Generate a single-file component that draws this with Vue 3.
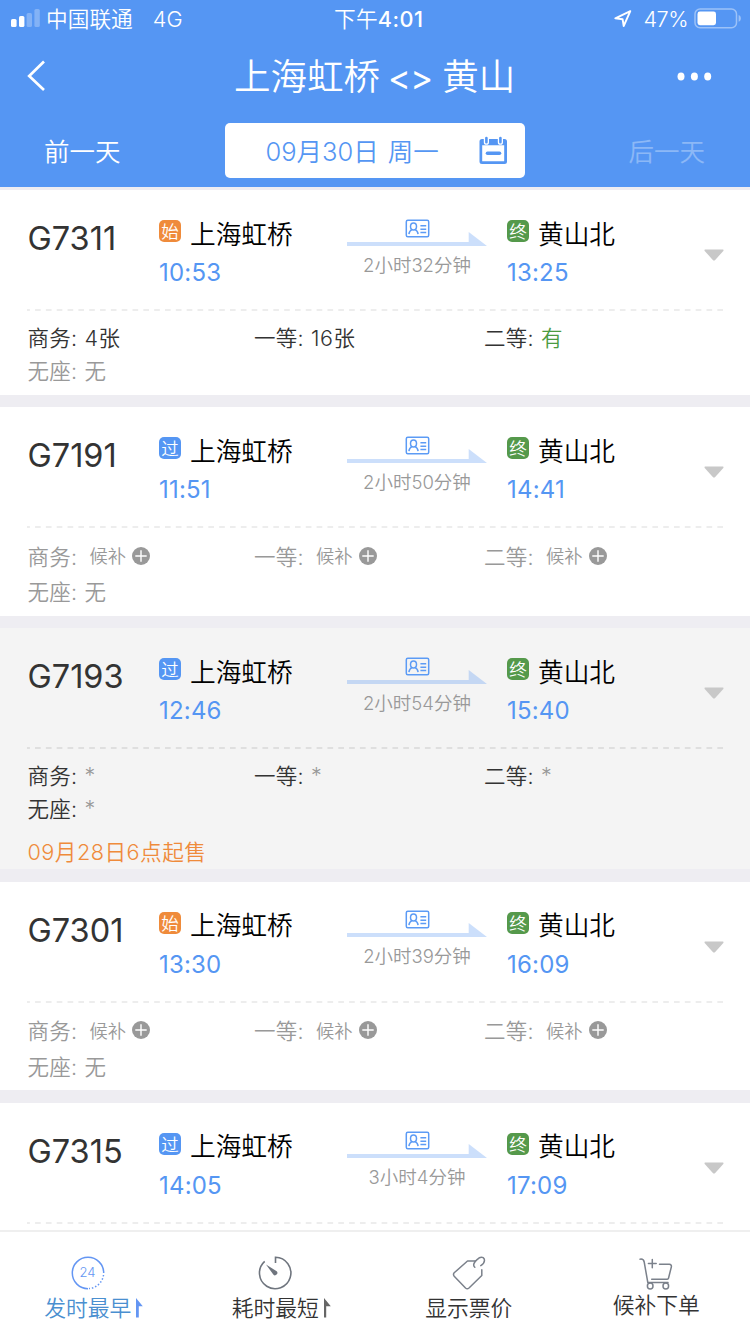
<script setup>
const trains = [
  {
    no: 'G7311', kind: '始', dep: '10:53', arr: '13:25', dur: '2小时32分钟', cls: 'first',
    seats: [
      { n: '商务', v: '4张' }, { n: '一等', v: '16张' }, { n: '二等', v: '有', c: 'green' },
      { n: '无座', v: '无', c: 'none' }
    ]
  },
  {
    no: 'G7191', kind: '过', dep: '11:51', arr: '14:41', dur: '2小时50分钟', cls: 'wait',
    seats: [{ n: '商务', w: true }, { n: '一等', w: true }, { n: '二等', w: true }, { n: '无座', v: '无', c: 'none' }]
  },
  {
    no: 'G7193', kind: '过', dep: '12:46', arr: '15:40', dur: '2小时54分钟', cls: 'presale',
    seats: [{ n: '商务', v: '*', c: 'star' }, { n: '一等', v: '*', c: 'star' }, { n: '二等', v: '*', c: 'star' }, { n: '无座', v: '*', c: 'star' }],
    note: '09月28日6点起售'
  },
  {
    no: 'G7301', kind: '始', dep: '13:30', arr: '16:09', dur: '2小时39分钟', cls: 'wait',
    seats: [{ n: '商务', w: true }, { n: '一等', w: true }, { n: '二等', w: true }, { n: '无座', v: '无', c: 'none' }]
  },
  { no: 'G7315', kind: '过', dep: '14:05', arr: '17:09', dur: '3小时4分钟', cls: 'wait', seats: [] }
]
</script>

<template>
  <div class="app">
    <header>
      <div class="status">
        <div class="st-left">
          <svg width="30" height="19" viewBox="0 0 30 19" fill="#fff">
            <rect x="0" y="10" width="5.6" height="8" rx="1.6" />
            <rect x="8" y="7" width="5.4" height="11" rx="1.6" />
            <rect x="15.6" y="4" width="5.4" height="14" rx="1.6" opacity=".27" />
            <rect x="23.4" y="0" width="5.4" height="18" rx="1.6" opacity=".27" />
          </svg>
          <span class="carrier">中国联通</span><span class="net">4G</span>
        </div>
        <div class="clock">下午<b>4:01</b></div>
        <div class="st-right">
          <svg width="18" height="18" viewBox="0 0 18 18" fill="none" stroke="#fff" stroke-width="1.9" stroke-linejoin="round">
            <path d="M16.3 1.2 1.3 8.3 8.6 9.2 9.7 16Z" />
          </svg>
          <span class="pct">47%</span>
          <svg width="48" height="21" viewBox="0 0 48 21">
            <rect x="1" y="1" width="41.5" height="18.8" rx="5" fill="none" stroke="#fff" stroke-opacity=".42" stroke-width="1.5" />
            <rect x="3.5" y="3.6" width="18.5" height="13.6" rx="2.4" fill="#fff" />
            <path d="M44.6 7c3 .6 3 6.200 0 6.800z" fill="#fff" opacity=".42" />
          </svg>
        </div>
      </div>
      <div class="nav">
        <svg class="back" width="19" height="32" viewBox="0 0 19 32" fill="none" stroke="#fff" stroke-width="2.7">
          <path d="M17 1.500 2.200 16 17 30" />
        </svg>
        <h1><span>上海虹桥</span><i>&lt;&gt;</i><span>黄山</span></h1>
        <svg class="more" width="35" height="9" viewBox="0 0 35 9" fill="#fff">
          <ellipse cx="4" cy="4.500" rx="3.500" ry="4" /><ellipse cx="17.400" cy="4.500" rx="3.500" ry="4" /><ellipse cx="30.700" cy="4.500" rx="3.500" ry="4" />
        </svg>
      </div>
      <div class="days">
        <span class="day">前一天</span>
        <div class="date">
          <span class="md">09月30日</span><span class="wk">周一</span>
          <svg width="29" height="29" viewBox="0 0 29 29">
            <path fill="#5596f3" fill-rule="evenodd" d="M3 3h22.500q2.500 0 2.500 2.500V25.500q0 2.500-2.500 2.500H3q-2.500 0-2.500-2.500V5.500Q.500 3 3 3zM3.200 9.300V25.300h22V9.300z" />
            <path d="M7.400 2v4.200M21.400 2v4.200" stroke="#fff" stroke-width="5.200" stroke-linecap="round" />
            <path d="M7.400 2v4.200M21.400 2v4.200" stroke="#5596f3" stroke-width="2.600" stroke-linecap="round" />
            <path d="M8.500 17.300h12" stroke="#5596f3" stroke-width="3.600" stroke-linecap="round" />
          </svg>
        </div>
        <span class="day off">后一天</span>
      </div>
    </header>

    <main>
      <section v-for="t in trains" :key="t.no" class="card" :class="t.cls">
        <div class="trip">
          <div class="no">{{ t.no }}</div>
          <div class="stop">
            <div class="station"><em :class="t.kind === '始' ? 'orange' : 'blue'">{{ t.kind }}</em>上海虹桥</div>
            <div class="time">{{ t.dep }}</div>
          </div>
          <div class="mid">
            <svg width="140" height="28" viewBox="0 0 140 28">
              <path d="M0 23h121.700V13L140 27H0z" fill="#5596f3" fill-opacity=".3" />
              <g fill="none" stroke="#5c9bf5" stroke-width="1.500">
                <rect x="59.300" y="1.200" width="22.400" height="16.600" rx="1.500" />
                <ellipse cx="66.500" cy="7.500" rx="3" ry="3.500" />
                <path d="M61.900 15.200q.500-3.600 3-4.600M68.100 10.600q2.600 1 3 4.600M73.400 6.800h5.800M73.400 10.200h5.800M73.400 13.600h5.800" />
              </g>
            </svg>
            <div class="dur">{{ t.dur }}</div>
          </div>
          <div class="stop">
            <div class="station"><em class="greenbg">终</em>黄山北</div>
            <div class="time">{{ t.arr }}</div>
          </div>
          <svg class="drop" width="20" height="12" viewBox="0 0 20 12"><path d="M1 .500h18q1 .500.300 1.400L11.200 11q-1.200 1-2.400 0L.700 1.900Q0 1 1 .500z" fill="#c8c8c8" /></svg>
        </div>
        <svg class="dash" width="696" height="2" viewBox="0 0 696 2"><path d="M-2.800 1H696" stroke="currentColor" stroke-width="1.700" stroke-dasharray="5.700 5.130" /></svg>
        <div v-if="t.seats.length" class="seats">
          <div v-for="s in t.seats" :key="s.n" class="seat" :class="s.w ? 'waiting' : s.c">
            <span class="name">{{ s.n }}:</span>
            <template v-if="s.w">
              <span class="hb">候补</span>
              <svg width="18" height="18" viewBox="0 0 18 18"><circle cx="9" cy="9" r="9" fill="#999" /><path d="M9 3.300v11.400M3.300 9h11.400" stroke="#fff" stroke-width="1.400" /></svg>
            </template>
            <span v-else class="val">{{ s.v }}</span>
          </div>
        </div>
        <div v-if="t.note" class="note">{{ t.note }}</div>
      </section>
    </main>

    <footer>
      <div class="tab flagged active">
        <svg width="34" height="34" viewBox="0 0 34 34" fill="none" stroke="#6496f3" stroke-width="1.500">
          <path d="M17 32.700A15.700 15.700 0 1 1 32.700 17" />
          <path d="M32.500 19A15.700 15.700 0 0 1 18 32.600" stroke-dasharray="1.500 1.900" />
          <text x="16.500" y="21.400" text-anchor="middle" font-size="13" fill="#6496f3" stroke="none">24</text>
        </svg>
        <div class="label"><span>发时最早</span>
          <svg width="7" height="20" viewBox="0 0 7 20" fill="#6496f3"><path d="M0 0 6.800 8.200H2.800V19.500H0z" /></svg>
        </div>
      </div>
      <div class="tab flagged">
        <svg width="34" height="34" viewBox="0 0 34 34" fill="none" stroke="#6f757e" stroke-width="1.600">
          <path d="M17.500 7V1.300A15.700 15.700 0 1 1 6.700 5.300" />
          <path d="M8 8.500 18.700 15.300A2.200 2.200 0 1 1 15.300 18.500z" fill="#6f757e" stroke="none" />
        </svg>
        <div class="label"><span>耗时最短</span>
          <svg width="7" height="20" viewBox="0 0 7 20" fill="#666"><path d="M0 0 6.800 8.200H2.200V19.500H0z" /></svg>
        </div>
      </div>
      <div class="tab">
        <svg width="34" height="34" viewBox="0 0 34 34" fill="none" stroke="#7b818b" stroke-width="1.500" stroke-linejoin="round" stroke-linecap="round">
          <path d="M23.500 5H15.500L2.200 16.800Q.800 18.500 2.200 20.200L13.500 32Q15.200 33.400 17 32L29.800 19.500V13.800" />
          <path d="M22.800 11.200C20.300 9 22.400 5.800 25.600 3.200C28 .300 31.300.800 32.200 2.900C33 5.400 31.400 8 28.800 9.600" />
        </svg>
        <div class="label"><span>显示票价</span></div>
      </div>
      <div class="tab cart">
        <svg width="34" height="34" viewBox="0 0 34 34" fill="none" stroke="#7b818b" stroke-width="1.500" stroke-linejoin="round" stroke-linecap="round">
          <path d="M1 3.200Q4.600 2.600 5.200 6L8.800 26.500H29M12.700 23.200H28.300Q29.300 23.200 29.500 22.200L32.400 10.700Q32.600 8.300 30.400 8.300H20.500M13.300 3.400V11.700M9.400 7.600H17.200" />
          <ellipse cx="11.200" cy="30" rx="2.800" ry="3" /><ellipse cx="26.800" cy="30" rx="2.800" ry="3" />
        </svg>
        <div class="label"><span>候补下单</span></div>
      </div>
    </footer>
  </div>
</template>

<style>
html, body { margin: 0; overflow: hidden; }
</style>

<style scoped>
.app { width: 750px; height: 1333px; overflow: hidden; display: flex; flex-direction: column; background: #eeedf2; font-family: Inter, "Noto Sans CJK SC", sans-serif; font-weight: 350; color: #333; white-space: nowrap; }
header { flex: none; height: 186.500px; box-sizing: border-box; background: #5596f3; color: #fff; }
.status { height: 37px; display: flex; align-items: center; justify-content: space-between; padding: 0 8px 0 11px; font-size: 21.700px; font-weight: 350; }
.st-left, .st-right { display: flex; align-items: center; width: 250px; }
.st-right { width: 247px; justify-content: flex-end; }
.clock { width: 92px; margin: -2px -4px 0 0; letter-spacing: .2px; }
.carrier { margin: -2px 0 0 5px; }
.net { margin-left: 20px; }
.clock b { font-weight: 500; letter-spacing: .5px; }
.pct { margin: 0 6px 0 11px; letter-spacing: -.5px; }
.nav { height: 78px; display: flex; align-items: center; padding: 0 38px 0 27px; }
.more { margin-left: auto; }
h1 { margin: 2px 0 0 188px; display: flex; align-items: center; font-size: 36.500px; font-weight: 350; line-height: 50px; }
h1 i { font-style: normal; margin: 1px 9.500px 0 8px; font-size: 34.500px; font-weight: 400; letter-spacing: -.5px; }
.days { height: 70px; display: grid; grid-template-columns: 181px 300px 1fr; align-items: center; padding: 0 45px 0 44px; font-size: 25.500px; }
.day, .md, .wk { margin-top: -2px; }
.off { opacity: .32; text-align: right; }
.date { height: 55px; box-sizing: border-box; padding: 0 17px 0 40.500px; border-radius: 5px; background: #fff; color: #5596f3; display: flex; align-items: center; }
.wk { margin-left: 9px; }
.date svg { margin-left: auto; }
main { flex: 1; min-height: 0; overflow: hidden; padding-top: 3.500px; }
.card { background: #fff; height: 208.500px; margin-bottom: 12.500px; overflow: hidden; }
.card.first { height: 204.500px; }
.card.presale { height: 241.200px; background: #f4f4f4; }
.trip { height: 119px; display: grid; grid-template-columns: 131.500px 188px 140px 217px 20px; padding-left: 27.500px; align-items: start; }
.mid { padding-top: 28.500px; }
.mid svg { display: block; }
.no { margin-top: 29px; line-height: 40px; font-size: 32.500px; font-weight: 400; letter-spacing: 0; }
.stop { padding-top: 23px; }
.mid + .stop { margin-left: 20px; }
.station { display: flex; align-items: center; height: 38px; font-size: 25.700px; color: #000; }
em { width: 22px; height: 22px; margin: -2px 9px 0 0; border-radius: 5px; font-style: normal; font-size: 17.500px; line-height: 23px; text-align: center; color: #fff; }
.orange { background: #ef8b3b; }
.blue { background: #5596f3; }
.greenbg { background: #55994b; }
.time { margin-top: 6px; line-height: 32px; font-size: 24px; color: #5596f3; font-weight: 400; letter-spacing: .2px; }
.dur { margin-top: 5px; text-align: center; font-size: 18.500px; line-height: 26px; color: #999; }
.drop { margin-top: 59px; }
.dash { display: block; margin-left: 27px; color: #e8e8e8; }
.presale .dash { color: #d8d8d8; }
.seats { display: grid; grid-template-columns: 226.500px 230px 240px; padding: 9px 0 0 27.500px; grid-auto-rows: 33px; font-size: 21.500px; }
.wait .seats { grid-auto-rows: 35.500px; padding-top: 9.500px; }
.seat { display: flex; align-items: center; letter-spacing: .2px; }
.name { width: 57px; }
.val { letter-spacing: .6px; }
.waiting, .none, .star .val { color: #999; }
.green .val { color: #4b9b41; }
.hb { margin-left: 5px; font-size: 18.300px; width: 42.500px; letter-spacing: 0; }
.waiting svg { margin-top: 1px; }
.note { margin: 12.500px 0 0 27.500px; font-size: 21.700px; line-height: 30px; color: #ef8b3b; letter-spacing: .45px; }
footer { flex: none; height: 103px; box-sizing: border-box; border-top: 2px solid #efefef; background: #fff; display: flex; padding-top: 24px; }
.tab { width: 187.500px; display: flex; flex-direction: column; align-items: center; font-size: 21.800px; }
.tab > svg { display: block; flex: none; }
.flagged > svg { margin-right: 12px; }
.label { display: flex; align-items: center; gap: 5px; line-height: 30px; margin-top: 3px; }
.cart .label { margin-top: 0; }
.active .label { color: #4a8fd0; }
</style>
